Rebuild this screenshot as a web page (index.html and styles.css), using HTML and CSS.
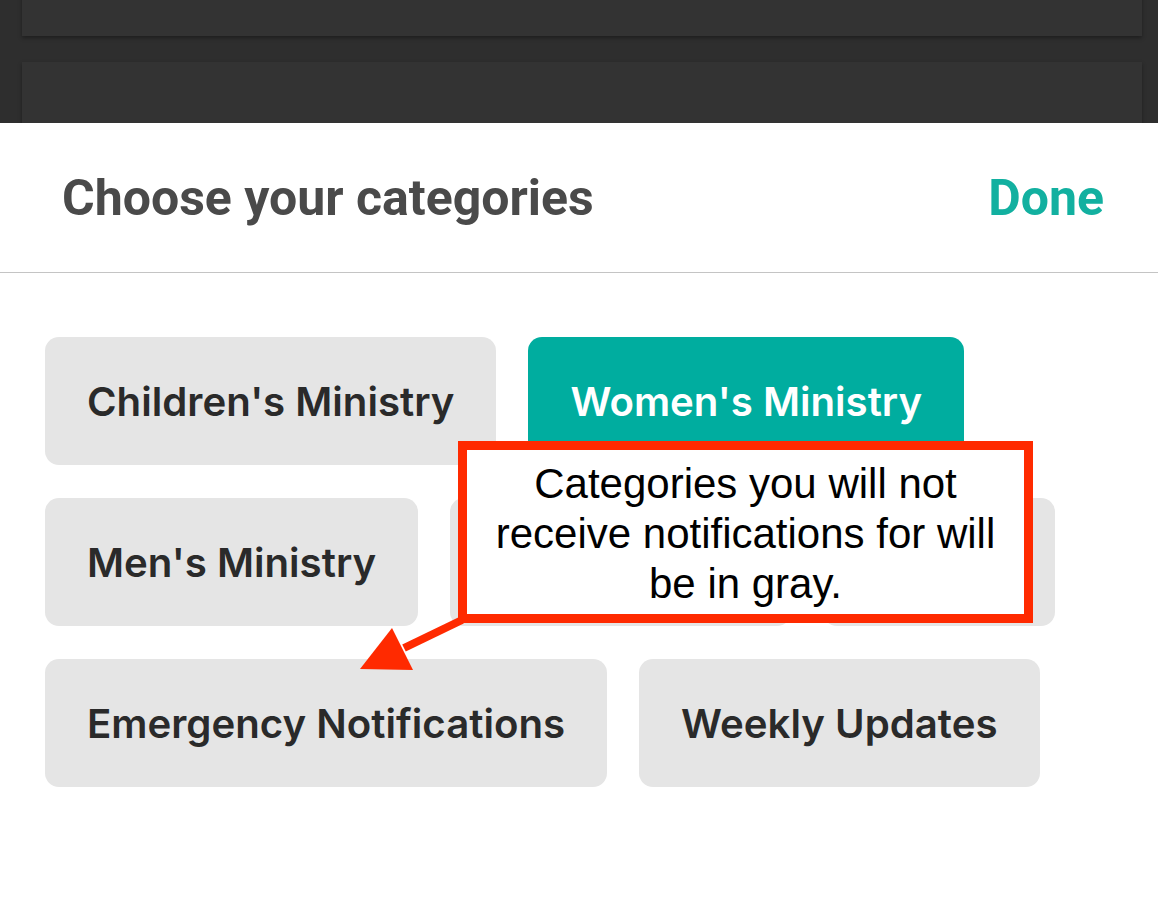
FILE: index.html
```html
<!DOCTYPE html>
<html>
<head>
  <meta charset="UTF-8" />
  <title>Choose your categories</title>
  <link rel="stylesheet" href="styles.css">
</head>
<body>

<!-- dimmed list behind the sheet -->
<div class="backdrop">
  <div class="card card-top"></div>
  <div class="card"></div>
</div>

<div class="sheet">
  <div class="sheet-header">
    <h1>Choose your categories</h1>
    <span class="done">Done</span>
  </div>

  <div class="chips">
    <div class="chip">Children's Ministry</div>
    <div class="chip active">Women's Ministry</div>
    <div class="chip">Men's Ministry</div>
    <!-- these two sit under the callout -->
    <div class="chip chip-hidden-a"></div>
    <div class="chip chip-hidden-b"></div>
    <div class="chip">Emergency Notifications</div>
    <div class="chip">Weekly Updates</div>

    <!-- annotation overlay -->
    <div class="callout">
      Categories you will not receive notifications for will be in gray.
    </div>
    <svg class="arrow" width="120" height="70" viewBox="0 0 120 70">
      <line x1="108" y1="8" x2="50" y2="36" stroke="#ff2a00" stroke-width="8" />
      <polygon points="6,57 38,16 59,58" fill="#ff2a00" />
    </svg>
  </div>
</div>

</body>
</html>
```

FILE: styles.css
```css
body {
  margin: 0;
  padding: 0;
  background-color: #ffffff;
  font-family: Inter, "Noto Sans", sans-serif;
}
.backdrop {
  height: 123px;
  overflow: hidden;
  background-color: #2e2e2e;
  padding: 0 16px 0 22px;
}
.card {
  height: 90px;
  background-color: #333333;
  box-shadow: 0 2px 4px rgba(0, 0, 0, 0.35);
  margin-bottom: 26px;
}
.card-top {
  margin-top: -54px;
}
.sheet {
  background-color: #ffffff;
  min-height: 778px;
}
.sheet-header {
  height: 149px;
  display: flex;
  align-items: center;
  justify-content: space-between;
  padding: 0 54px 0 62px;
  border-bottom: 1px solid #c4c4c4;
  font-family: Roboto, "Liberation Sans", sans-serif;
  font-weight: 700;
  font-size: 50px;
}
h1 {
  margin: 0;
  font-size: 50px;
  font-weight: 700;
  color: #4a4a4a;
}
.done {
  color: #12b0a0;
}
.chips {
  position: relative;
  display: flex;
  flex-wrap: wrap;
  gap: 33px 32px;
  padding: 64px 45px 0 45px;
  width: 1068px;
}
.chip {
  height: 128px;
  display: flex;
  align-items: center;
  padding: 0 42px;
  background-color: #e5e5e5;
  border-radius: 14px;
  color: #2a2a2a;
  font-size: 40.2px;
  font-weight: 600;
  white-space: nowrap;
  box-sizing: border-box;
}
.chip.active {
  background-color: #00ad9f;
  color: #ffffff;
}
.chip-hidden-a {
  width: 341px;
}
.chip-hidden-b {
  width: 232px;
}
.callout {
  position: absolute;
  left: 458px;
  top: 168px;
  width: 575px;
  height: 182px;
  box-sizing: border-box;
  border: 9px solid #ff2a00;
  background-color: #ffffff;
  padding: 9px 10px 0 10px;
  text-align: center;
  font-family: "Liberation Sans", Arial, sans-serif;
  font-size: 42px;
  line-height: 50px;
  color: #000000;
}
.arrow {
  position: absolute;
  left: 354px;
  top: 339px;
}
```
